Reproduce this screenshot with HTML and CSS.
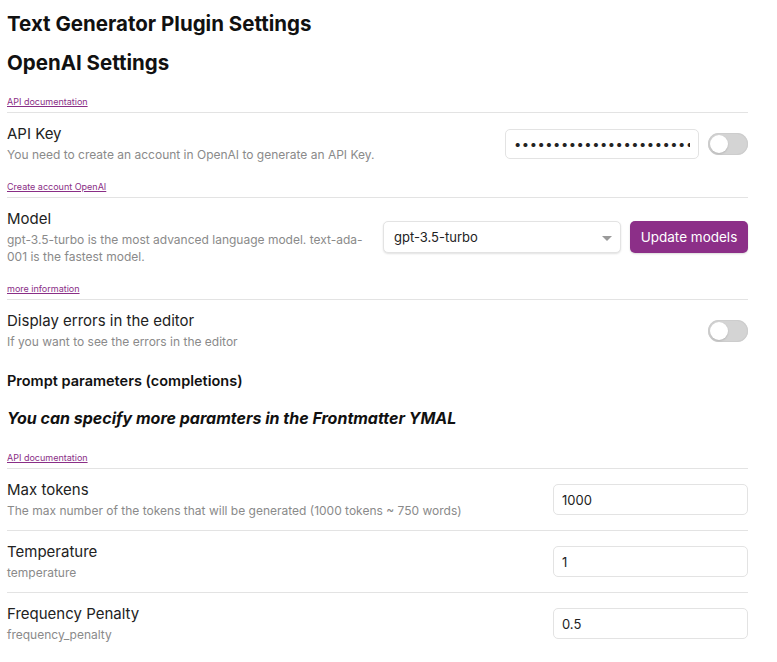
FILE: index.html
```html
<!DOCTYPE html>
<html lang="en">
<head>
<meta charset="utf-8">
<title>Text Generator Plugin Settings</title>
<link rel="stylesheet" href="styles.css">
</head>
<body>
<div class="settings">
  <h1 class="title">Text Generator Plugin Settings</h1>
  <h2 class="title sub">OpenAI Settings</h2>

  <div class="link-row"><a href="#">API documentation</a></div>
  <div class="setting-item">
    <div class="info">
      <div class="name">API Key</div>
      <div class="desc">You need to create an account in OpenAI to generate an API Key.</div>
    </div>
    <div class="control">
      <input class="text-input key-input" type="password" value="sk-abcdefghijklmnopqrstuvwxyz0123456789">
      <div class="toggle"><span class="knob"></span></div>
    </div>
  </div>

  <div class="link-row"><a href="#">Create account OpenAI</a></div>
  <div class="setting-item">
    <div class="info">
      <div class="name">Model</div>
      <div class="desc">gpt-3.5-turbo is the most advanced language model. text-ada-001 is the fastest model.</div>
    </div>
    <div class="control">
      <div class="dropdown"><span>gpt-3.5-turbo</span></div>
      <button class="cta" type="button">Update models</button>
    </div>
  </div>

  <div class="link-row"><a href="#">more information</a></div>
  <div class="setting-item">
    <div class="info">
      <div class="name">Display errors in the editor</div>
      <div class="desc">If you want to see the errors in the editor</div>
    </div>
    <div class="control">
      <div class="toggle"><span class="knob"></span></div>
    </div>
  </div>

  <div class="section-heading">Prompt parameters (completions)</div>
  <h3 class="note-heading">You can specify more paramters in the Frontmatter YMAL</h3>

  <div class="link-row"><a href="#">API documentation</a></div>
  <div class="setting-item">
    <div class="info">
      <div class="name">Max tokens</div>
      <div class="desc">The max number of the tokens that will be generated (1000 tokens ~ 750 words)</div>
    </div>
    <div class="control">
      <input class="text-input num-input" type="text" value="1000">
    </div>
  </div>
  <div class="setting-item">
    <div class="info">
      <div class="name">Temperature</div>
      <div class="desc">temperature</div>
    </div>
    <div class="control">
      <input class="text-input num-input" type="text" value="1">
    </div>
  </div>
  <div class="setting-item">
    <div class="info">
      <div class="name">Frequency Penalty</div>
      <div class="desc">frequency_penalty</div>
    </div>
    <div class="control">
      <input class="text-input num-input" type="text" value="0.5">
    </div>
  </div>
</div>
</body>
</html>
```

FILE: styles.css
```css
html, body {
  margin: 0;
  padding: 0;
  background: #ffffff;
}

body {
  font-family: Inter, "Noto Sans", "Liberation Sans", sans-serif;
  color: #222222;
  overflow: hidden;
}

.settings {
  width: 741px;
  margin-left: 7px;
}

.title {
  margin: 0;
  font-size: 20.5px;
  line-height: 25px;
  font-weight: 700;
  color: #111111;
  padding-top: 11px;
}

.title.sub {
  padding-top: 14px;
}

.link-row {
  padding: 7px 0 4px;
  line-height: 12px;
  font-size: 9px;
}

.title.sub + .link-row {
  padding-top: 21px;
}

.link-row a {
  color: #8a2e86;
  text-decoration: underline;
}

.setting-item {
  display: flex;
  align-items: center;
  border-top: 1px solid #e3e3e3;
  padding: 11px 0;
}

.info {
  flex: 1 1 auto;
  min-width: 0;
  margin-right: 12px;
}

.name {
  font-size: 15px;
  line-height: 19px;
  color: #222222;
}

.desc {
  margin-top: 3px;
  font-size: 12px;
  line-height: 17px;
  color: #8a8a8a;
}

.control {
  flex: 0 0 auto;
  display: flex;
  align-items: center;
  gap: 9px;
}

.text-input {
  box-sizing: border-box;
  font-family: Inter, "Noto Sans", "Liberation Sans", sans-serif;
  font-size: 13px;
  color: #222222;
  background: #ffffff;
  border: 1px solid #e3e3e3;
  border-radius: 5px;
  padding: 0 8px;
  outline: none;
}

.key-input {
  width: 194px;
  height: 30px;
  letter-spacing: 0.5px;
}

.num-input {
  width: 195px;
  height: 31px;
}

.toggle {
  position: relative;
  width: 40px;
  height: 22px;
  border-radius: 11px;
  background: #d4d4d4;
  box-shadow: inset 0 0 0 1px #cdcdcd;
}

.knob {
  position: absolute;
  left: 2px;
  top: 2px;
  width: 18px;
  height: 18px;
  border-radius: 50%;
  background: #ffffff;
  box-shadow: 0 1px 2px rgba(0, 0, 0, 0.15);
}

.dropdown {
  position: relative;
  box-sizing: border-box;
  width: 238px;
  height: 32px;
  padding: 0 28px 0 10px;
  display: flex;
  align-items: center;
  font-size: 13px;
  color: #222222;
  background: #ffffff;
  border: 1px solid #e3e3e3;
  border-radius: 5px;
  box-shadow: 0 1px 2px rgba(0, 0, 0, 0.12);
}

.dropdown::after {
  content: "";
  position: absolute;
  right: 8px;
  top: 14px;
  border-left: 5px solid transparent;
  border-right: 5px solid transparent;
  border-top: 5px solid #9a9a9a;
}

.cta {
  box-sizing: border-box;
  width: 118px;
  height: 32px;
  border: none;
  border-radius: 5px;
  background: #8c2f88;
  color: #ffffff;
  font-family: Inter, "Noto Sans", "Liberation Sans", sans-serif;
  font-size: 13.5px;
  box-shadow: 0 1px 2px rgba(0, 0, 0, 0.15);
}

.section-heading {
  padding-top: 10px;
  font-size: 14.5px;
  line-height: 20px;
  font-weight: 600;
  color: #111111;
}

.note-heading {
  margin: 15px 0 0;
  font-size: 16px;
  line-height: 24px;
  font-weight: 700;
  font-style: italic;
  color: #111111;
}

.note-heading + .link-row {
  padding-top: 22px;
}
```
